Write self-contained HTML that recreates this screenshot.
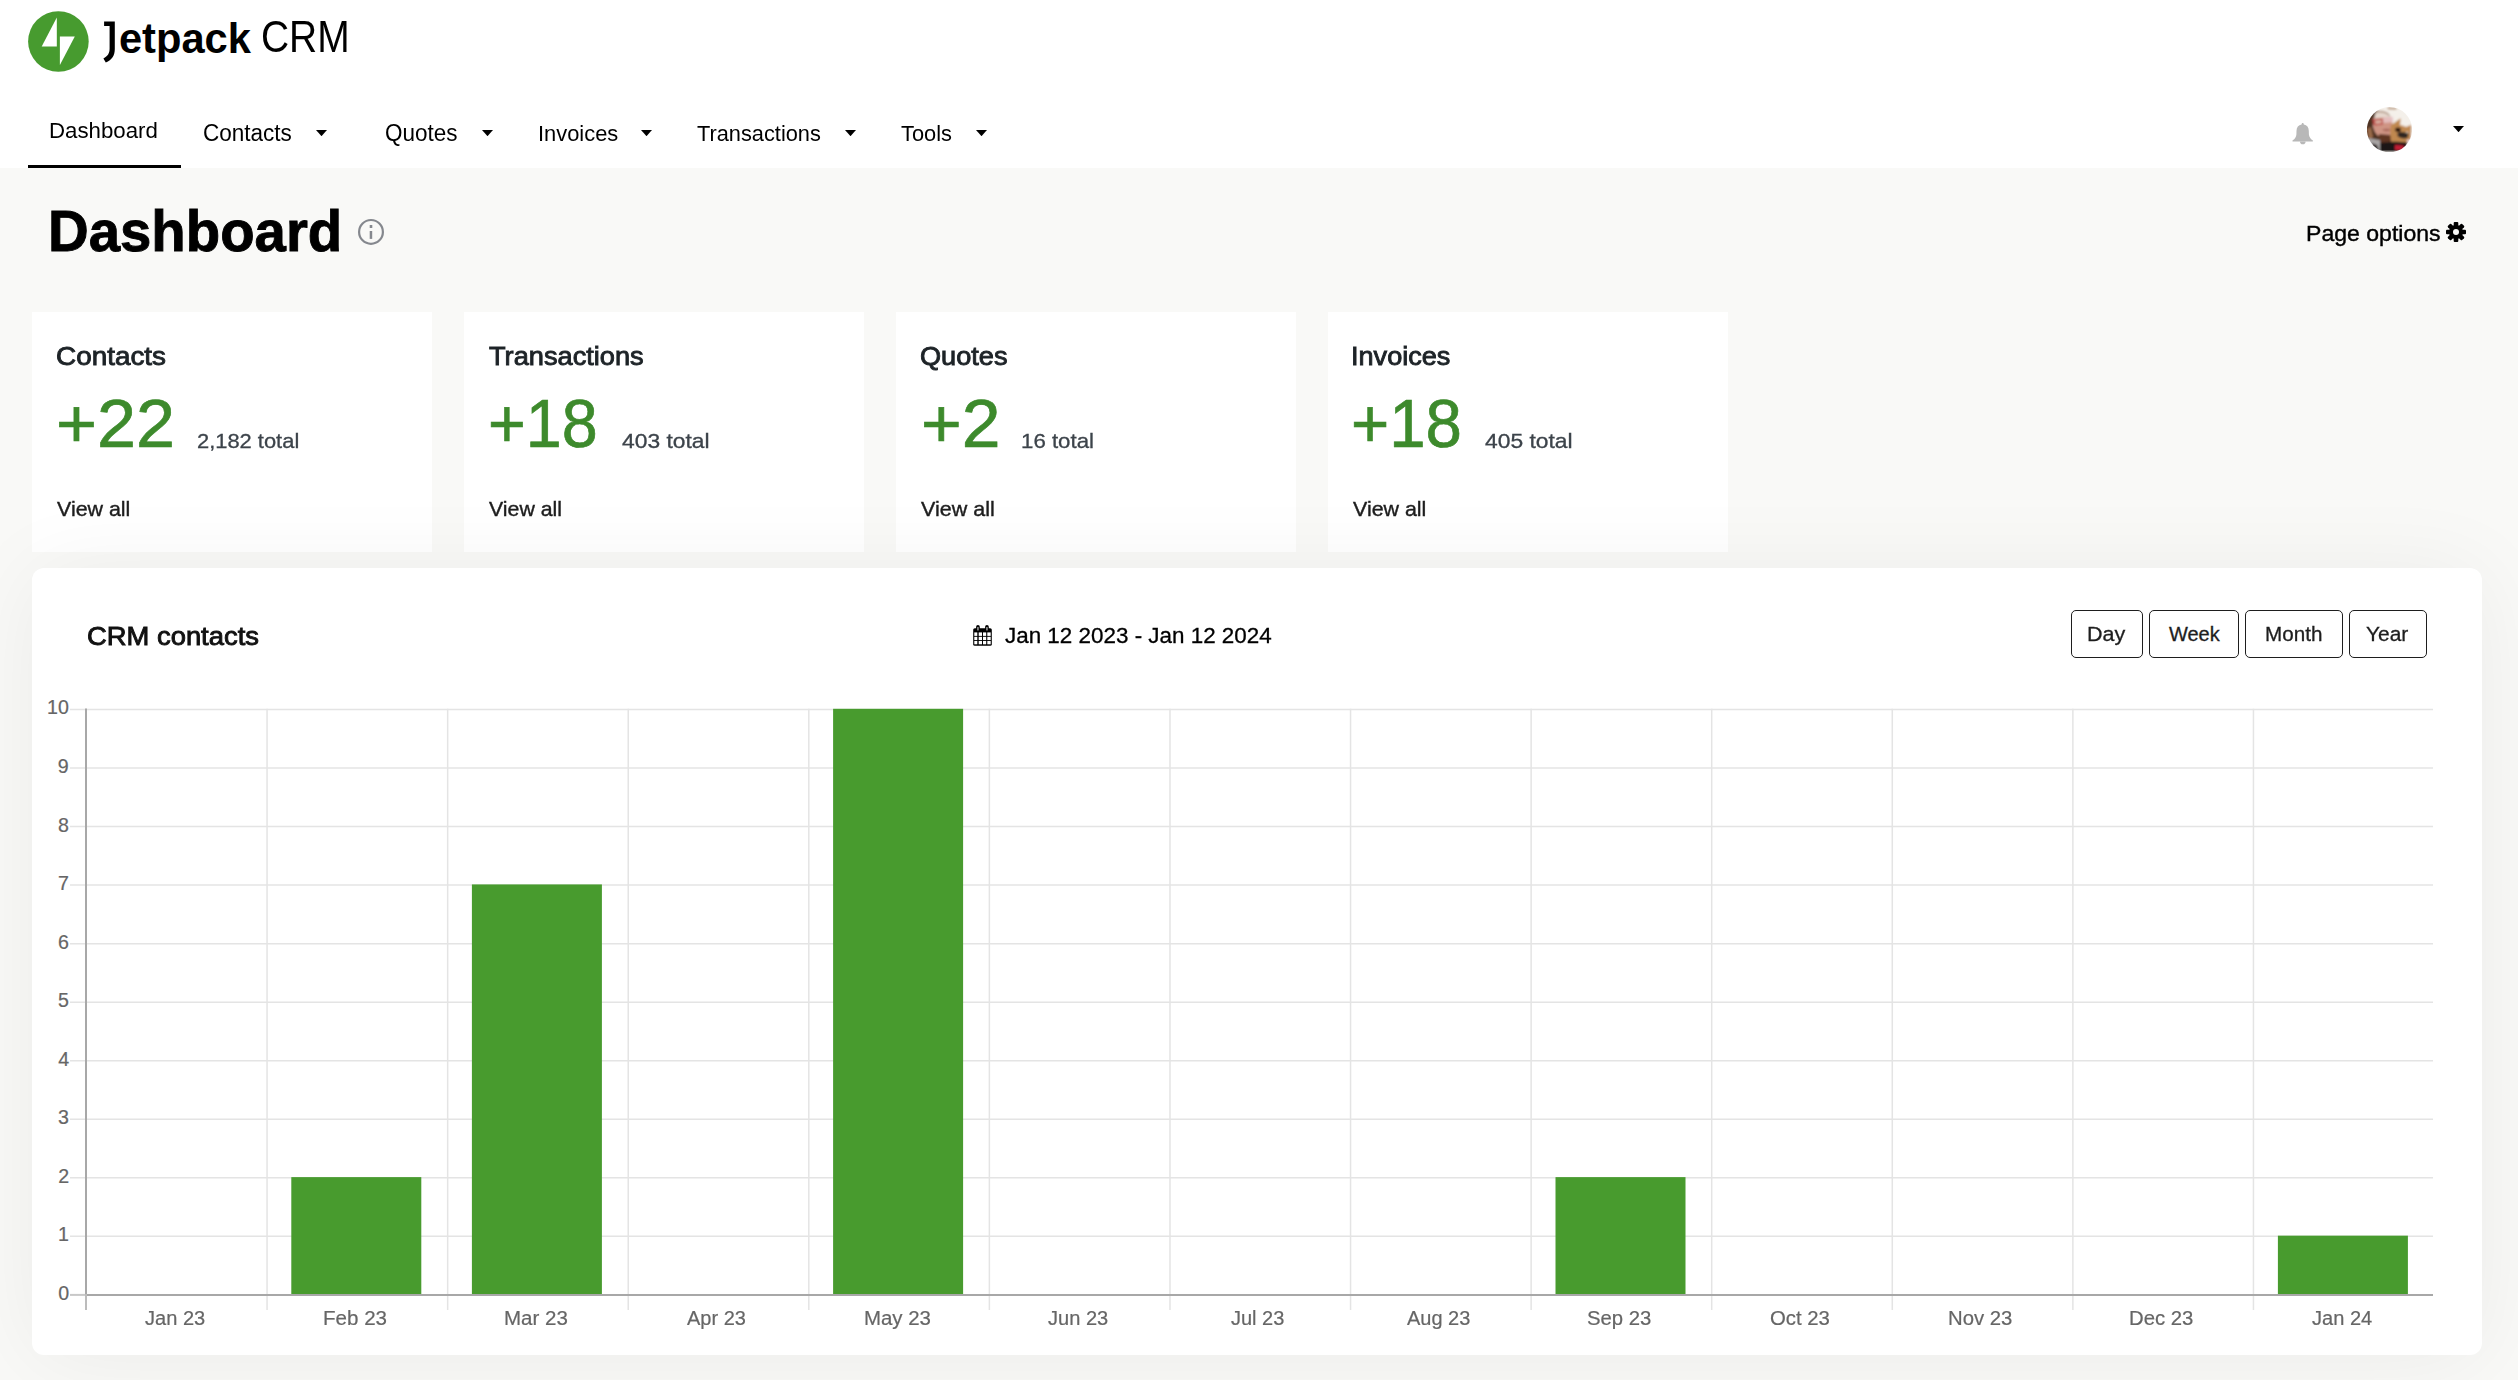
<!DOCTYPE html>
<html><head><meta charset="utf-8"><style>
html,body{margin:0;padding:0}
body{width:2518px;height:1380px;position:relative;overflow:hidden;background:#f9f9f7;font-family:"Liberation Sans",sans-serif}
.t{position:absolute;white-space:nowrap;transform-origin:0 0}
</style></head><body>
<div style="position:absolute;left:0;top:0;width:2518px;height:168px;background:#fff"></div>
<svg style="position:absolute;left:0;top:0" width="100" height="90" viewBox="0 0 100 90">
<circle cx="58.4" cy="41.5" r="30.3" fill="#479b2f"/>
<polygon points="56.8,17.4 41.7,46.4 56.8,46.4" fill="#fff"/>
<polygon points="59.9,36.4 74.8,36.4 59.9,64.9" fill="#fff"/>
</svg>
<svg style="position:absolute;left:0;top:0" width="130" height="70" viewBox="0 0 130 70"><path d="M104.1 21.6 L114.8 21.6 L114.8 49 C114.8 55.5 112 59.8 105.8 62.6 L103.4 58.4 C107.8 56.2 109.6 53.2 109.6 48.5 L109.6 26.1 L104.1 26.1 Z" fill="#000"/></svg>
<div class="t" style="left:118.92px;top:17.78px;font-size:41.66px;line-height:41.66px;font-weight:700;color:#000;">etpack</div>
<div class="t" style="left:261.22px;top:15.33px;font-size:43.98px;line-height:43.98px;font-weight:400;color:#000;transform:scaleX(0.8855);">CRM</div>
<div class="t" style="left:49.10px;top:120.42px;font-size:22.48px;line-height:22.48px;font-weight:400;color:#000;transform:scaleX(0.9906);">Dashboard</div>
<div class="t" style="left:202.94px;top:122.40px;font-size:23.07px;line-height:23.07px;font-weight:400;color:#000;transform:scaleX(0.9764);">Contacts</div>
<div class="t" style="left:384.98px;top:122.46px;font-size:23.21px;line-height:23.21px;font-weight:400;color:#000;transform:scaleX(0.9688);">Quotes</div>
<div class="t" style="left:538.06px;top:122.59px;font-size:22.34px;line-height:22.34px;font-weight:400;color:#000;transform:scaleX(0.9798);">Invoices</div>
<div class="t" style="left:697.22px;top:122.59px;font-size:22.34px;line-height:22.34px;font-weight:400;color:#000;transform:scaleX(0.9750);">Transactions</div>
<div class="t" style="left:900.98px;top:122.59px;font-size:22.34px;line-height:22.34px;font-weight:400;color:#000;transform:scaleX(0.9769);">Tools</div>
<svg style="position:absolute;left:315.5px;top:130px" width="11.0" height="6.199999999999989" viewBox="0 0 11.0 6.199999999999989"><polygon points="0,0 11.0,0 5.5,6.199999999999989" fill="#000"/></svg>
<svg style="position:absolute;left:482px;top:130px" width="11" height="6.199999999999989" viewBox="0 0 11 6.199999999999989"><polygon points="0,0 11,0 5.5,6.199999999999989" fill="#000"/></svg>
<svg style="position:absolute;left:641.3px;top:130px" width="11.0" height="6.199999999999989" viewBox="0 0 11.0 6.199999999999989"><polygon points="0,0 11.0,0 5.5,6.199999999999989" fill="#000"/></svg>
<svg style="position:absolute;left:845px;top:130px" width="11" height="6.199999999999989" viewBox="0 0 11 6.199999999999989"><polygon points="0,0 11,0 5.5,6.199999999999989" fill="#000"/></svg>
<svg style="position:absolute;left:975.5px;top:130px" width="11.0" height="6.199999999999989" viewBox="0 0 11.0 6.199999999999989"><polygon points="0,0 11.0,0 5.5,6.199999999999989" fill="#000"/></svg>
<svg style="position:absolute;left:2452.5px;top:126px" width="11.0" height="6.199999999999989" viewBox="0 0 11.0 6.199999999999989"><polygon points="0,0 11.0,0 5.5,6.199999999999989" fill="#000"/></svg>
<div style="position:absolute;left:28px;top:165px;width:153px;height:3px;background:#000"></div>
<svg style="position:absolute;left:2285px;top:115px" width="35" height="35" viewBox="0 0 35 35">
<path d="M16.6 9.6 C16.6 8.6 17.0 7.9 17.7 7.9 C18.4 7.9 18.8 8.6 18.8 9.6 C22 10.2 23.8 12.5 23.8 16 L23.9 19.5 C24.2 22 25.5 24 27.6 25.3 C28.1 25.6 28.1 26.6 27.4 26.6 L8.0 26.6 C7.3 26.6 7.3 25.6 7.8 25.3 C9.9 24 11.2 22 11.4 19.5 L11.5 16 C11.5 12.5 13.4 10.2 16.6 9.6 Z" fill="#b8b8b8"/>
<path d="M15.0 26.4 A2.8 2.8 0 0 0 20.6 26.4 Z" fill="#b8b8b8"/>
</svg>
<svg style="position:absolute;left:2367.2px;top:106.6px" width="45" height="45" viewBox="0 0 45 45">
<defs><clipPath id="av"><circle cx="22.5" cy="22.7" r="22.6"/></clipPath>
<filter id="bl" x="-20%" y="-20%" width="140%" height="140%"><feGaussianBlur stdDeviation="0.8"/></filter></defs>
<g clip-path="url(#av)"><g filter="url(#bl)">
<rect x="-3" y="-3" width="51" height="51" fill="#f4f0ea"/>
<path d="M20 0.5 L30 0.8 L29 2.4 L21 2.2 Z" fill="#b08a6a"/>
<path d="M-3 12 C0 6 5 3 11 3 L9 8 C7 12 6 16 6 20 L14 22 L15 36 L3 45 L-3 45 Z" fill="#4e3020"/>
<path d="M0 22 L4 20 L6 30 L2 33 Z" fill="#9a6a4a"/>
<path d="M9 4 C14 2.5 19 3 22 6 L24 11 L7 12 Z" fill="#e6d8ce"/>
<path d="M9 5 C14 4 19 5 23 9" stroke="#8a6a50" stroke-width="1" fill="none"/>
<path d="M6 11.5 L24.5 10 L26 21 C25.5 27 22 31 17 31 C10 30 6.5 25 6 18 Z" fill="#cf9484"/>
<path d="M5 12.5 L15.5 11.5 L16 17.5 L7 18.5 Z" fill="#b83a3a" opacity="0.85"/>
<path d="M8 13.6 L14.5 13 L14.6 16.3 L8.6 17 Z" fill="#d8b0a0"/>
<path d="M16 10.8 L26 9.5 L26.5 15 L16.5 16 Z" fill="#e8c8cc" opacity="0.8"/>
<path d="M15.5 22.6 C18 21.5 22 21.5 24 23 C22 24.8 18 24.8 15.5 23.6 Z" fill="#a8685a"/>
<path d="M12 27 L24 28 L25 38 L12 40 Z" fill="#5e3424"/>
<path d="M23.5 20 C24 17 25.5 17 26 16.8 L33.7 11.3 L33 18 C35 18.5 37 19 39 20 L44.3 17.7 L44 28 L44 38 L25 37 C23 31 23 25 23.5 20 Z" fill="#c08850"/>
<ellipse cx="31" cy="22.8" rx="3" ry="2.3" fill="#2a1810"/>
<path d="M30.5 26 C33 24.5 38 24.5 41.5 26.5 L40.5 31 C36 32 32.5 31 30.5 29 Z" fill="#2e2624"/>
<path d="M38 25 L41 24.5 L41.5 26.5 Z" fill="#d8d0c8"/>
<path d="M1 31 L13 33 L14 45 L1 45 Z" fill="#a8a4a4"/>
<path d="M4 36 L10 38 L12 44 L6 44 Z" fill="#2a2222"/>
<path d="M13 36 C20 35 30 34 40 35.5 L42 45 L13 45 Z" fill="#1c1414"/>
<path d="M28 38 L37 38.5 L36 43 L28 43 Z" fill="#c41e34"/>
<path d="M40 33 L45 32 L45 40 L41 40 Z" fill="#ecdde4"/>
</g></g></svg>
<div class="t" style="left:48.16px;top:203.42px;font-size:57.52px;line-height:57.52px;font-weight:700;color:#000;transform:scaleX(0.9795);-webkit-text-stroke:0.9px #000;">Dashboard</div>
<svg style="position:absolute;left:356px;top:217px" width="30" height="30" viewBox="0 0 30 30">
<circle cx="15" cy="14.9" r="11.9" fill="none" stroke="#85888e" stroke-width="2.2"/>
<rect x="13.7" y="8" width="2.6" height="3" fill="#85888e"/>
<rect x="13.7" y="14" width="2.5" height="7.9" fill="#85888e"/>
</svg>
<div class="t" style="left:2306.42px;top:222.63px;font-size:22.34px;line-height:22.34px;font-weight:400;color:#000;transform:scaleX(1.0326);-webkit-text-stroke:0.4px #000;">Page options</div>
<svg style="position:absolute;left:2446px;top:222px" width="20" height="20" viewBox="0 0 20 20">
<g fill="#000" transform="translate(10,10)">
<circle r="7"/>
<rect x="-2.3" y="-10" width="4.6" height="20" rx="1"/>
<rect x="-2.3" y="-10" width="4.6" height="20" rx="1" transform="rotate(45)"/>
<rect x="-2.3" y="-10" width="4.6" height="20" rx="1" transform="rotate(90)"/>
<rect x="-2.3" y="-10" width="4.6" height="20" rx="1" transform="rotate(135)"/>
</g><circle cx="10" cy="10" r="3" fill="#f9f9f7"/>
</svg>
<div style="position:absolute;left:32px;top:312px;width:400px;height:240px;background:#fff"></div>
<div style="position:absolute;left:464px;top:312px;width:400px;height:240px;background:#fff"></div>
<div style="position:absolute;left:896px;top:312px;width:400px;height:240px;background:#fff"></div>
<div style="position:absolute;left:1328px;top:312px;width:400px;height:240px;background:#fff"></div>
<div class="t" style="left:56.48px;top:342.63px;font-size:26.58px;line-height:26.58px;font-weight:400;color:#1d2327;transform:scaleX(1.0489);-webkit-text-stroke:0.9px #1d2327;">Contacts</div>
<div class="t" style="left:55.52px;top:389.47px;font-size:69.34px;line-height:69.34px;font-weight:400;color:#3d8a2c;transform:scaleX(1.0115);-webkit-text-stroke:0.7px #3d8a2c;">+22</div>
<div class="t" style="left:196.50px;top:430.94px;font-size:20.14px;line-height:20.14px;font-weight:400;color:#3c434a;transform:scaleX(1.0878);-webkit-text-stroke:0.3px #3c434a;">2,182 total</div>
<div class="t" style="left:57.04px;top:498.56px;font-size:20.69px;line-height:20.69px;font-weight:400;color:#1e1e1e;transform:scaleX(1.0347);-webkit-text-stroke:0.4px #1e1e1e;">View all</div>
<div class="t" style="left:488.58px;top:343.47px;font-size:26.58px;line-height:26.58px;font-weight:400;color:#1d2327;transform:scaleX(1.0232);-webkit-text-stroke:0.9px #1d2327;">Transactions</div>
<div class="t" style="left:488.00px;top:389.47px;font-size:69.34px;line-height:69.34px;font-weight:400;color:#3d8a2c;transform:scaleX(0.9330);-webkit-text-stroke:0.7px #3d8a2c;">+18</div>
<div class="t" style="left:621.60px;top:430.94px;font-size:20.14px;line-height:20.14px;font-weight:400;color:#3c434a;transform:scaleX(1.1340);-webkit-text-stroke:0.3px #3c434a;">403 total</div>
<div class="t" style="left:489.02px;top:498.56px;font-size:20.69px;line-height:20.69px;font-weight:400;color:#1e1e1e;transform:scaleX(1.0294);-webkit-text-stroke:0.4px #1e1e1e;">View all</div>
<div class="t" style="left:919.98px;top:342.63px;font-size:26.58px;line-height:26.58px;font-weight:400;color:#1d2327;transform:scaleX(1.0215);-webkit-text-stroke:0.9px #1d2327;">Quotes</div>
<div class="t" style="left:920.56px;top:389.47px;font-size:69.34px;line-height:69.34px;font-weight:400;color:#3d8a2c;transform:scaleX(1.0063);-webkit-text-stroke:0.7px #3d8a2c;">+2</div>
<div class="t" style="left:1021.40px;top:430.94px;font-size:20.14px;line-height:20.14px;font-weight:400;color:#3c434a;transform:scaleX(1.1057);-webkit-text-stroke:0.3px #3c434a;">16 total</div>
<div class="t" style="left:920.82px;top:498.56px;font-size:20.69px;line-height:20.69px;font-weight:400;color:#1e1e1e;transform:scaleX(1.0401);-webkit-text-stroke:0.4px #1e1e1e;">View all</div>
<div class="t" style="left:1351.04px;top:343.47px;font-size:26.58px;line-height:26.58px;font-weight:400;color:#1d2327;transform:scaleX(1.0191);-webkit-text-stroke:0.9px #1d2327;">Invoices</div>
<div class="t" style="left:1351.40px;top:389.47px;font-size:69.34px;line-height:69.34px;font-weight:400;color:#3d8a2c;transform:scaleX(0.9431);-webkit-text-stroke:0.7px #3d8a2c;">+18</div>
<div class="t" style="left:1485.00px;top:430.94px;font-size:20.14px;line-height:20.14px;font-weight:400;color:#3c434a;transform:scaleX(1.1353);-webkit-text-stroke:0.3px #3c434a;">405 total</div>
<div class="t" style="left:1353.04px;top:498.56px;font-size:20.69px;line-height:20.69px;font-weight:400;color:#1e1e1e;transform:scaleX(1.0347);-webkit-text-stroke:0.4px #1e1e1e;">View all</div>
<div style="position:absolute;left:32px;top:568px;width:2450px;height:787px;background:#fff;border-radius:12px;box-shadow:0 4px 90px rgba(0,0,0,0.06)"></div>
<div class="t" style="left:86.72px;top:622.83px;font-size:26.43px;line-height:26.43px;font-weight:400;color:#111;transform:scaleX(1.0363);-webkit-text-stroke:0.9px #111;">CRM contacts</div>
<svg style="position:absolute;left:966px;top:618px" width="34" height="34" viewBox="0 0 34 34">
<rect x="7.2" y="10.2" width="18.6" height="17.6" rx="1.6" fill="#000"/>
<g fill="#fff">
<rect x="8.3" y="14.4" width="3.0" height="3.5"/><rect x="12.7" y="14.4" width="3.3" height="3.5"/><rect x="17.0" y="14.4" width="3.2" height="3.5"/><rect x="21.3" y="14.4" width="3.4" height="3.5"/>
<rect x="8.3" y="18.8" width="3.0" height="3.2"/><rect x="12.7" y="18.8" width="3.3" height="3.2"/><rect x="17.0" y="18.8" width="3.2" height="3.2"/><rect x="21.3" y="18.8" width="3.4" height="3.2"/>
<rect x="8.3" y="22.9" width="3.0" height="3.4"/><rect x="12.7" y="22.9" width="3.3" height="3.4"/><rect x="17.0" y="22.9" width="3.2" height="3.4"/><rect x="21.3" y="22.9" width="3.4" height="3.4"/>
</g>
<rect x="10.1" y="7.1" width="3.7" height="6.2" rx="1.85" fill="#000"/><rect x="19.1" y="7.1" width="3.7" height="6.2" rx="1.85" fill="#000"/>
<rect x="11.3" y="8.9" width="1.3" height="3.7" rx="0.6" fill="#bbb"/><rect x="20.3" y="8.9" width="1.3" height="3.7" rx="0.6" fill="#bbb"/>
</svg>
<div class="t" style="left:1005.42px;top:625.46px;font-size:21.63px;line-height:21.63px;font-weight:400;color:#000;transform:scaleX(1.0366);-webkit-text-stroke:0.3px #000;">Jan 12 2023 - Jan 12 2024</div>
<div style="position:absolute;left:2071px;top:610px;width:70px;height:46px;border:1px solid #1e1e1e;border-radius:5px;background:#fff"></div>
<div style="position:absolute;left:2149px;top:610px;width:88px;height:46px;border:1px solid #1e1e1e;border-radius:5px;background:#fff"></div>
<div style="position:absolute;left:2245px;top:610px;width:96px;height:46px;border:1px solid #1e1e1e;border-radius:5px;background:#fff"></div>
<div style="position:absolute;left:2349px;top:610px;width:76px;height:46px;border:1px solid #1e1e1e;border-radius:5px;background:#fff"></div>
<div class="t" style="left:2087.00px;top:623.05px;font-size:21.08px;line-height:21.08px;font-weight:400;color:#1e1e1e;transform:scaleX(1.0219);-webkit-text-stroke:0.3px #1e1e1e;">Day</div>
<div class="t" style="left:2168.95px;top:623.96px;font-size:20.00px;line-height:20.00px;font-weight:400;color:#1e1e1e;-webkit-text-stroke:0.3px #1e1e1e;">Week</div>
<div class="t" style="left:2265.40px;top:623.96px;font-size:20.00px;line-height:20.00px;font-weight:400;color:#1e1e1e;transform:scaleX(1.0319);-webkit-text-stroke:0.3px #1e1e1e;">Month</div>
<div class="t" style="left:2366.30px;top:623.05px;font-size:21.08px;line-height:21.08px;font-weight:400;color:#1e1e1e;transform:scaleX(0.9939);-webkit-text-stroke:0.3px #1e1e1e;">Year</div>
<svg style="position:absolute;left:0;top:0" width="2518" height="1380" viewBox="0 0 2518 1380">
<line x1="70" y1="1236.36" x2="2433.0" y2="1236.36" stroke="#e4e4e4" stroke-width="1.5"/>
<line x1="70" y1="1177.82" x2="2433.0" y2="1177.82" stroke="#e4e4e4" stroke-width="1.5"/>
<line x1="70" y1="1119.28" x2="2433.0" y2="1119.28" stroke="#e4e4e4" stroke-width="1.5"/>
<line x1="70" y1="1060.74" x2="2433.0" y2="1060.74" stroke="#e4e4e4" stroke-width="1.5"/>
<line x1="70" y1="1002.20" x2="2433.0" y2="1002.20" stroke="#e4e4e4" stroke-width="1.5"/>
<line x1="70" y1="943.66" x2="2433.0" y2="943.66" stroke="#e4e4e4" stroke-width="1.5"/>
<line x1="70" y1="885.12" x2="2433.0" y2="885.12" stroke="#e4e4e4" stroke-width="1.5"/>
<line x1="70" y1="826.58" x2="2433.0" y2="826.58" stroke="#e4e4e4" stroke-width="1.5"/>
<line x1="70" y1="768.04" x2="2433.0" y2="768.04" stroke="#e4e4e4" stroke-width="1.5"/>
<line x1="70" y1="709.50" x2="2433.0" y2="709.50" stroke="#e4e4e4" stroke-width="1.5"/>
<line x1="267.07" y1="708.7" x2="267.07" y2="1310" stroke="#e4e4e4" stroke-width="1.5"/>
<line x1="447.65" y1="708.7" x2="447.65" y2="1310" stroke="#e4e4e4" stroke-width="1.5"/>
<line x1="628.23" y1="708.7" x2="628.23" y2="1310" stroke="#e4e4e4" stroke-width="1.5"/>
<line x1="808.81" y1="708.7" x2="808.81" y2="1310" stroke="#e4e4e4" stroke-width="1.5"/>
<line x1="989.39" y1="708.7" x2="989.39" y2="1310" stroke="#e4e4e4" stroke-width="1.5"/>
<line x1="1169.97" y1="708.7" x2="1169.97" y2="1310" stroke="#e4e4e4" stroke-width="1.5"/>
<line x1="1350.55" y1="708.7" x2="1350.55" y2="1310" stroke="#e4e4e4" stroke-width="1.5"/>
<line x1="1531.13" y1="708.7" x2="1531.13" y2="1310" stroke="#e4e4e4" stroke-width="1.5"/>
<line x1="1711.71" y1="708.7" x2="1711.71" y2="1310" stroke="#e4e4e4" stroke-width="1.5"/>
<line x1="1892.29" y1="708.7" x2="1892.29" y2="1310" stroke="#e4e4e4" stroke-width="1.5"/>
<line x1="2072.87" y1="708.7" x2="2072.87" y2="1310" stroke="#e4e4e4" stroke-width="1.5"/>
<line x1="2253.45" y1="708.7" x2="2253.45" y2="1310" stroke="#e4e4e4" stroke-width="1.5"/>
<rect x="291.30" y="1177.12" width="130.0" height="117.58" fill="#489b2e"/>
<rect x="471.90" y="884.42" width="130.0" height="410.28" fill="#489b2e"/>
<rect x="833.10" y="708.80" width="130.0" height="585.90" fill="#489b2e"/>
<rect x="1555.50" y="1177.12" width="130.0" height="117.58" fill="#489b2e"/>
<rect x="2277.90" y="1235.66" width="130.0" height="59.04" fill="#489b2e"/>
<line x1="70" y1="1294.9" x2="86.0" y2="1294.9" stroke="#c8c8c8" stroke-width="2"/>
<line x1="86.0" y1="1294.9" x2="2433.0" y2="1294.9" stroke="#a8a8a8" stroke-width="2"/>
<line x1="86.0" y1="1294" x2="86.0" y2="1310" stroke="#bcbcbc" stroke-width="2"/>
<line x1="86.0" y1="708.6" x2="86.0" y2="1294" stroke="#a8a8a8" stroke-width="2"/>
</svg>
<div class="t" style="left:58.18px;top:1283.88px;font-size:19.63px;line-height:19.63px;font-weight:400;color:#666;-webkit-text-stroke:0.2px #666;">0</div>
<div class="t" style="left:58.06px;top:1225.34px;font-size:19.63px;line-height:19.63px;font-weight:400;color:#666;-webkit-text-stroke:0.2px #666;">1</div>
<div class="t" style="left:58.14px;top:1166.80px;font-size:19.63px;line-height:19.63px;font-weight:400;color:#666;-webkit-text-stroke:0.2px #666;">2</div>
<div class="t" style="left:58.06px;top:1108.26px;font-size:19.63px;line-height:19.63px;font-weight:400;color:#666;-webkit-text-stroke:0.2px #666;">3</div>
<div class="t" style="left:58.14px;top:1049.72px;font-size:19.63px;line-height:19.63px;font-weight:400;color:#666;-webkit-text-stroke:0.2px #666;">4</div>
<div class="t" style="left:58.06px;top:991.18px;font-size:19.63px;line-height:19.63px;font-weight:400;color:#666;-webkit-text-stroke:0.2px #666;">5</div>
<div class="t" style="left:58.06px;top:932.64px;font-size:19.63px;line-height:19.63px;font-weight:400;color:#666;-webkit-text-stroke:0.2px #666;">6</div>
<div class="t" style="left:58.06px;top:874.10px;font-size:19.63px;line-height:19.63px;font-weight:400;color:#666;-webkit-text-stroke:0.2px #666;">7</div>
<div class="t" style="left:58.06px;top:815.56px;font-size:19.63px;line-height:19.63px;font-weight:400;color:#666;-webkit-text-stroke:0.2px #666;">8</div>
<div class="t" style="left:57.86px;top:757.02px;font-size:19.63px;line-height:19.63px;font-weight:400;color:#666;-webkit-text-stroke:0.2px #666;">9</div>
<div class="t" style="left:47.12px;top:698.48px;font-size:19.63px;line-height:19.63px;font-weight:400;color:#666;-webkit-text-stroke:0.2px #666;">10</div>
<div class="t" style="left:144.88px;top:1309.43px;font-size:19.91px;line-height:19.91px;font-weight:400;color:#666;transform:scaleX(1.0074);-webkit-text-stroke:0.2px #666;">Jan 23</div>
<div class="t" style="left:323.48px;top:1309.43px;font-size:19.91px;line-height:19.91px;font-weight:400;color:#666;transform:scaleX(1.0333);-webkit-text-stroke:0.2px #666;">Feb 23</div>
<div class="t" style="left:503.91px;top:1309.43px;font-size:19.91px;line-height:19.91px;font-weight:400;color:#666;transform:scaleX(1.0302);-webkit-text-stroke:0.2px #666;">Mar 23</div>
<div class="t" style="left:687.15px;top:1309.43px;font-size:19.91px;line-height:19.91px;font-weight:400;color:#666;transform:scaleX(1.0042);-webkit-text-stroke:0.2px #666;">Apr 23</div>
<div class="t" style="left:864.19px;top:1309.43px;font-size:19.91px;line-height:19.91px;font-weight:400;color:#666;transform:scaleX(1.0260);-webkit-text-stroke:0.2px #666;">May 23</div>
<div class="t" style="left:1048.18px;top:1309.43px;font-size:19.91px;line-height:19.91px;font-weight:400;color:#666;transform:scaleX(1.0074);-webkit-text-stroke:0.2px #666;">Jun 23</div>
<div class="t" style="left:1231.47px;top:1309.43px;font-size:19.91px;line-height:19.91px;font-weight:400;color:#666;transform:scaleX(1.0045);-webkit-text-stroke:0.2px #666;">Jul 23</div>
<div class="t" style="left:1406.85px;top:1309.43px;font-size:19.91px;line-height:19.91px;font-weight:400;color:#666;transform:scaleX(1.0037);-webkit-text-stroke:0.2px #666;">Aug 23</div>
<div class="t" style="left:1586.84px;top:1309.43px;font-size:19.91px;line-height:19.91px;font-weight:400;color:#666;transform:scaleX(1.0196);-webkit-text-stroke:0.2px #666;">Sep 23</div>
<div class="t" style="left:1769.88px;top:1309.43px;font-size:19.91px;line-height:19.91px;font-weight:400;color:#666;transform:scaleX(1.0218);-webkit-text-stroke:0.2px #666;">Oct 23</div>
<div class="t" style="left:1947.62px;top:1309.43px;font-size:19.91px;line-height:19.91px;font-weight:400;color:#666;transform:scaleX(1.0201);-webkit-text-stroke:0.2px #666;">Nov 23</div>
<div class="t" style="left:2128.81px;top:1309.43px;font-size:19.91px;line-height:19.91px;font-weight:400;color:#666;transform:scaleX(1.0201);-webkit-text-stroke:0.2px #666;">Dec 23</div>
<div class="t" style="left:2311.96px;top:1309.43px;font-size:19.91px;line-height:19.91px;font-weight:400;color:#666;transform:scaleX(1.0074);-webkit-text-stroke:0.2px #666;">Jan 24</div>
</body></html>
